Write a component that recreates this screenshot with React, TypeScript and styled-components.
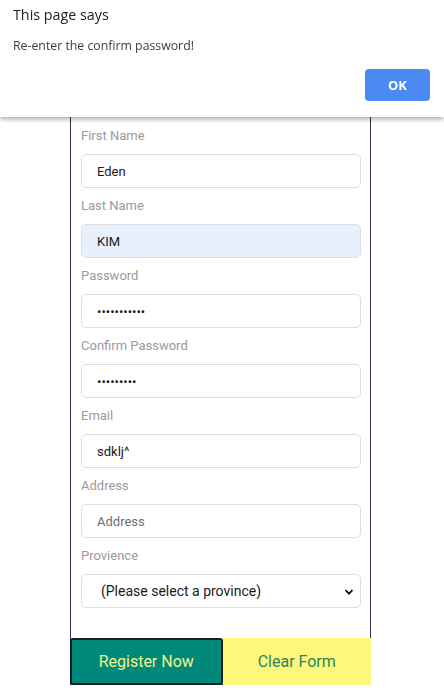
import React from 'react';
import styled, { createGlobalStyle } from 'styled-components';

const Global = createGlobalStyle`
  html, body {
    margin: 0;
    padding: 0;
    background: #ffffff;
  }
  * {
    box-sizing: border-box;
  }
`;

export default function App() {
  const [province, setProvince] = React.useState('');
  return (
    <>
      <Global />
      <Page>
        <Form onSubmit={(e) => e.preventDefault()}>
          <Fields>
            <Field>
              <Label>First Name</Label>
              <Input defaultValue="Eden" />
            </Field>
            <Field>
              <Label>Last Name</Label>
              <Input defaultValue="KIM" $autofill />
            </Field>
            <Field>
              <Label>Password</Label>
              <Input type="password" defaultValue="abcdefghijk" />
            </Field>
            <Field>
              <Label>Confirm Password</Label>
              <Input type="password" defaultValue="abcdefghi" />
            </Field>
            <Field>
              <Label>Email</Label>
              <Input defaultValue="sdklj^" />
            </Field>
            <Field>
              <Label>Address</Label>
              <Input placeholder="Address" />
            </Field>
            <Field>
              <Label>Provience</Label>
              <SelectWrap>
                <Select value={province} onChange={(e) => setProvince(e.target.value)}>
                  <option value="">(Please select a province)</option>
                  <option value="ON">Ontario</option>
                  <option value="QC">Quebec</option>
                  <option value="BC">British Columbia</option>
                </Select>
                <Chevron viewBox="0 0 10 10">
                  <path d="M1.5 3.2 L5 6.7 L8.5 3.2" />
                </Chevron>
              </SelectWrap>
            </Field>
          </Fields>
          <Buttons>
            <Button type="submit" $primary>Register Now</Button>
            <Button type="reset">Clear Form</Button>
          </Buttons>
        </Form>
      </Page>
      <Dialog>
        <DialogTitle>This page says</DialogTitle>
        <DialogText>Re-enter the confirm password!</DialogText>
        <DialogActions>
          <OkButton>OK</OkButton>
        </DialogActions>
      </Dialog>
    </>
  );
}

const Page = styled.div`
  padding: 100px 0 0 70px;
  font-family: Roboto, "Liberation Sans", sans-serif;
`;

const Form = styled.form`
  width: 301px;
  border: 1px solid #2b3550;
  display: flex;
  flex-direction: column;
`;

const Fields = styled.div`
  padding: 26px 9px 30px 10px;
  display: flex;
  flex-direction: column;
`;

const Field = styled.div`
  display: flex;
  flex-direction: column;
`;

const Label = styled.label`
  font-size: 13px;
  line-height: 18px;
  color: #9a9a9a;
  margin-bottom: 9px;
`;

const Input = styled.input<{ $autofill?: boolean }>`
  width: 100%;
  height: 34px;
  margin-bottom: 9px;
  padding: 0 15px;
  border: 1px solid #dedede;
  border-radius: 5px;
  background: ${(p) => (p.$autofill ? '#e8f0fe' : '#ffffff')};
  font-family: Roboto, "Liberation Sans", sans-serif;
  font-size: 13px;
  color: #1a1a1a;
  outline: none;
  &::placeholder {
    color: #6f6f6f;
  }
`;

const SelectWrap = styled.div`
  position: relative;
  width: 100%;
`;

const Select = styled.select`
  width: 100%;
  height: 34px;
  padding: 0 30px 0 19px;
  border: 1px solid #dedede;
  border-radius: 5px;
  background: #ffffff;
  appearance: none;
  font-family: Roboto, "Liberation Sans", sans-serif;
  font-size: 14px;
  color: #1a1a1a;
  outline: none;
`;

const Chevron = styled.svg`
  position: absolute;
  right: 7px;
  top: 13px;
  width: 10px;
  height: 10px;
  fill: none;
  stroke: #111;
  stroke-width: 1.8;
  pointer-events: none;
`;

const Buttons = styled.div`
  display: flex;
  margin: 0 -1px -1px;
`;

const Button = styled.button<{ $primary?: boolean }>`
  flex: 1;
  height: 47px;
  border: ${(p) => (p.$primary ? '2px solid #1b1f24' : 'none')};
  border-radius: ${(p) => (p.$primary ? '3px' : '0')};
  background: ${(p) => (p.$primary ? '#00897b' : '#fdf87c')};
  color: ${(p) => (p.$primary ? '#eef58a' : '#2b8560')};
  font-family: Roboto, "Liberation Sans", sans-serif;
  font-size: 16px;
  cursor: pointer;
`;

const Dialog = styled.div`
  position: fixed;
  top: 0;
  left: 0;
  width: 444px;
  height: 117px;
  background: #ffffff;
  box-shadow: 0 2px 5px rgba(0, 0, 0, 0.35);
  padding: 5px 14px 0 13px;
  font-family: "Open Sans", "Noto Sans", sans-serif;
  display: flex;
  flex-direction: column;
`;

const DialogTitle = styled.div`
  font-size: 14.3px;
  line-height: 20px;
  color: #202124;
`;

const DialogText = styled.div`
  margin-top: 13px;
  font-size: 12.3px;
  line-height: 16px;
  color: #3c3c3c;
`;

const DialogActions = styled.div`
  display: flex;
  justify-content: flex-end;
  margin-top: 15px;
`;

const OkButton = styled.button`
  width: 65px;
  height: 32px;
  border: none;
  border-radius: 4px;
  background: #4a8af2;
  color: #ffffff;
  font-family: "Open Sans", "Noto Sans", sans-serif;
  font-size: 13px;
  font-weight: 700;
  cursor: pointer;
`;
